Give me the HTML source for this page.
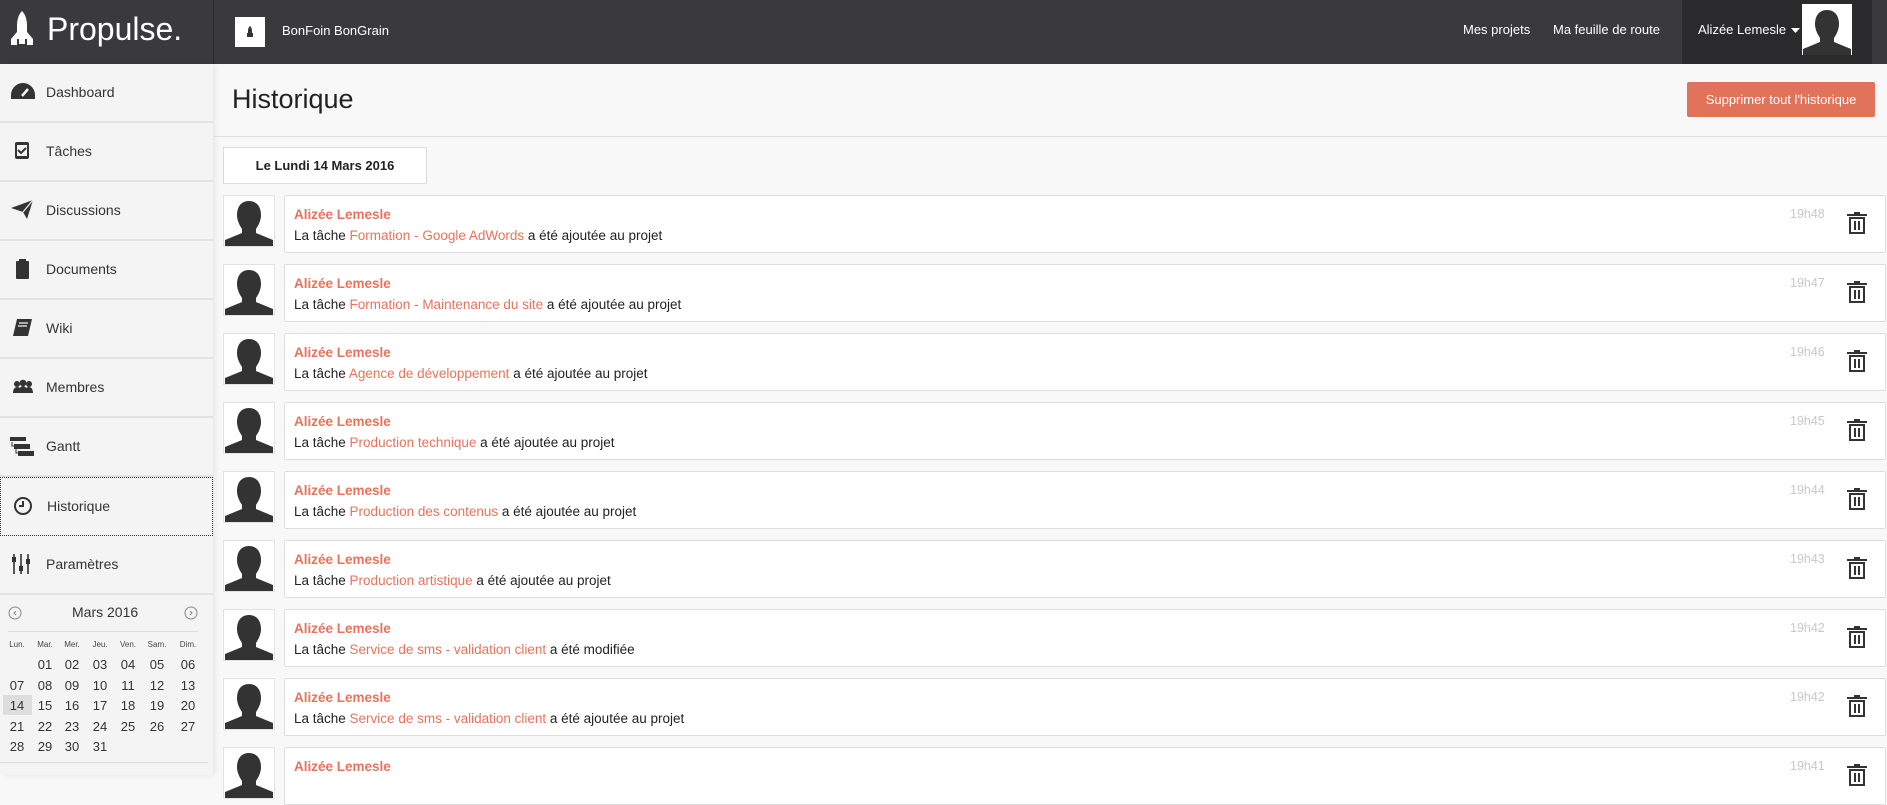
<!DOCTYPE html>
<html><head><meta charset="utf-8"><style>
*{margin:0;padding:0;box-sizing:border-box}
body{width:1887px;height:775px;overflow:hidden;background:#f8f8f8;font-family:"Liberation Sans",sans-serif;color:#333;position:relative}
.hdr{position:absolute;left:0;top:0;width:1887px;height:64px;background:#3a3a3c}
.abs{position:absolute}
.side{position:absolute;left:0;top:64px;width:213px;height:711px;background:#f4f4f4;box-shadow:2px 0 6px rgba(0,0,0,.08)}
.item{position:absolute;left:0;width:213px;height:59px;border-bottom:2px solid #e2e2e2;font-size:14px;color:#333}
.item span{position:absolute;left:46px;top:20px}
.item svg{position:absolute;left:10px;top:17px}
.cal{position:absolute;font-size:13px;color:#333}
.card{position:absolute;left:284px;width:1602px;height:58px;background:#fff;border:1px solid #dedede;border-radius:2px}
.av{position:absolute;left:223px;width:52px;height:52px;background:#fff;border:1px solid #e2e2e2}
.nm{position:absolute;left:9px;top:11px;font-size:13.5px;color:#e8735a;font-weight:bold}
.ds{position:absolute;left:9px;top:32px;font-size:13.5px;color:#222}
.ds b{font-weight:normal;color:#e8735a}
.tm{position:absolute;left:1505px;top:11px;font-size:12.5px;color:#c8c8c8}
.tr{position:absolute;left:1561px;top:16px}
</style></head><body>
<div class="hdr"></div>
<div class="abs" style="left:1682px;top:0;width:190px;height:64px;background:#2a2a2c"></div>
<svg class="abs" style="left:10px;top:11px" width="24" height="35" viewBox="0 0 24 35"><path d="M12 0C8 4 7 10 7 15v13h10V15c0-5-1-11-5-15z" fill="#fff"/><path d="M7 21l-6 7v6h6zM17 21l6 7v6h-6z" fill="#fff"/><rect x="9" y="28" width="6" height="5" fill="#fff"/></svg>
<div class="abs" style="left:47px;top:11px;font-size:32px;color:#fff">Propulse.</div>
<div class="abs" style="left:213px;top:0;width:1px;height:64px;background:#2c2c2e"></div>
<div class="abs" style="left:235px;top:17px;width:30px;height:30px;background:#fff"></div>
<svg class="abs" style="left:246px;top:26px" width="8" height="11"><path d="M4 0C2 2 2 4 2 6v3h4V6C6 4 6 2 4 0zM1 7v4h6V7z" fill="#333"/></svg>
<div class="abs" style="left:282px;top:23px;font-size:13px;color:#fff">BonFoin BonGrain</div>
<div class="abs" style="left:1463px;top:22px;font-size:13px;color:#fff">Mes projets</div>
<div class="abs" style="left:1553px;top:22px;font-size:13px;color:#fff">Ma feuille de route</div>
<div class="abs" style="left:1698px;top:22px;font-size:13px;color:#fff">Alizée Lemesle</div>
<svg class="abs" style="left:1791px;top:28px" width="9" height="6"><path d="M0 0h9L4.5 5z" fill="#fff"/></svg>
<div class="abs" style="left:1802px;top:4px;width:50px;height:51px;background:#fff;overflow:hidden"><svg width="50" height="51" viewBox="0 0 50 51"><path d="M25 6c-8 0-12 6-12 14 0 6 3 11 5 14v4L1 45v6h48v-6L32 38v-4c2-3 5-8 5-14 0-8-4-14-12-14z" fill="#333"/></svg></div>

<div class="side">
<div class="item" style="top:0"><svg width="26" height="20" viewBox="0 0 26 20"><path d="M13 2C6 2 1 8 1 14v4h24v-4C25 8 20 2 13 2z" fill="#333"/><path d="M12 15l6-7" stroke="#f4f4f4" stroke-width="2.5"/></svg><span>Dashboard</span></div>
<div class="item" style="top:59px"><svg width="26" height="22" viewBox="0 0 26 22"><rect x="5" y="2" width="14" height="17" rx="2" fill="#333"/><rect x="7" y="5" width="10" height="11" fill="#f4f4f4"/><path d="M8 10l3 3 5-5" stroke="#333" stroke-width="2" fill="none"/></svg><span>Tâches</span></div>
<div class="item" style="top:118px"><svg width="26" height="22" viewBox="0 0 26 22"><path d="M1 9L23 1 17 20 13 13z" fill="#333"/><path d="M13 13L23 1" stroke="#f4f4f4" stroke-width="1.2"/></svg><span>Discussions</span></div>
<div class="item" style="top:177px"><svg width="26" height="22" viewBox="0 0 26 22"><rect x="6" y="3" width="13" height="18" rx="1" fill="#333"/><rect x="9" y="1" width="7" height="4" fill="#333"/></svg><span>Documents</span></div>
<div class="item" style="top:236px"><svg width="26" height="22" viewBox="0 0 26 22"><path d="M7 2h15l-4 17H3z" fill="#333"/><path d="M9 6h9M8 9h9" stroke="#f4f4f4" stroke-width="1.2"/></svg><span>Wiki</span></div>
<div class="item" style="top:295px"><svg width="26" height="22" viewBox="0 0 26 22"><circle cx="7" cy="8" r="3" fill="#333"/><circle cx="13" cy="7" r="3.3" fill="#333"/><circle cx="19" cy="8" r="3" fill="#333"/><path d="M3 17c0-4 2-6 4-6s3 1 3 1 1-2 3-2 3 2 3 2 1-1 3-1 4 2 4 6z" fill="#333"/></svg><span>Membres</span></div>
<div class="item" style="top:354px"><svg width="26" height="22" viewBox="0 0 26 22"><rect x="0" y="2" width="16" height="4" fill="#333"/><rect x="4" y="9" width="16" height="5" fill="#333"/><rect x="8" y="16" width="16" height="5" fill="#333"/><path d="M2 7v4h2M6 14v4h2" stroke="#333" stroke-width="1" fill="none"/></svg><span>Gantt</span></div>
<div class="item" style="top:413px;border:1px dotted #333"><svg width="26" height="22" viewBox="0 0 26 22"><circle cx="12" cy="11" r="8" fill="none" stroke="#333" stroke-width="2"/><path d="M12 6v5h-4" stroke="#333" stroke-width="2" fill="none"/></svg><span>Historique</span></div>
<div class="item" style="top:472px"><svg width="26" height="22" viewBox="0 0 26 22"><path d="M4 1v20M11 1v20M18 1v20" stroke="#333" stroke-width="1.6"/><rect x="2" y="4" width="4" height="5" fill="#333"/><rect x="9" y="13" width="4" height="5" fill="#333"/><rect x="16" y="6" width="4" height="5" fill="#333"/></svg><span>Paramètres</span></div>
</div>
<svg class="abs" style="left:8px;top:606px" width="14" height="14"><circle cx="7" cy="7" r="6" fill="none" stroke="#888"/><path d="M8 5L6 7l2 2" stroke="#888" fill="none"/></svg>
<svg class="abs" style="left:184px;top:606px" width="14" height="14"><circle cx="7" cy="7" r="6" fill="none" stroke="#888"/><path d="M6 5l2 2-2 2" stroke="#888" fill="none"/></svg>
<div class="cal" style="left:72px;top:604px;font-size:14px">Mars 2016</div>
<div class="abs" style="left:8px;top:631px;width:190px;height:1px;background:#ddd"></div>
<div class="abs" style="left:3px;top:695px;width:29px;height:20px;background:#ddd"></div>
<div class="abs" style="left:0;top:762px;width:208px;height:1px;background:#ddd"></div>
<div id="cal"></div>
<script>
var xs=[17,45,72,100,128,157,188],h=["Lun.","Mar.","Mer.","Jeu.","Ven.","Sam.","Dim."],s="";
h.forEach(function(t,i){s+='<div class="cal" style="left:'+(xs[i]-10)+'px;top:640px;font-size:8px;width:20px;text-align:center;color:#444">'+t+'</div>'});
var ys=[657,678,698,719,739];
for(var d=1;d<=31;d++){var p=d,r=Math.floor(p/7),c=p%7;s+='<div class="cal" style="left:'+(xs[c]-12)+'px;top:'+ys[r]+'px;width:24px;text-align:center">'+(d<10?"0"+d:d)+'</div>'}
document.getElementById("cal").innerHTML=s;
</script>

<div class="abs" style="left:232px;top:84px;font-size:27px;color:#222">Historique</div>
<div class="abs" style="left:1687px;top:82px;width:188px;height:35px;background:#e0735a;border-radius:2px;color:#fff;font-size:13px;text-align:center;line-height:35px">Supprimer tout l'historique</div>
<div class="abs" style="left:213px;top:136px;width:1674px;height:1px;background:#ddd"></div>
<div class="abs" style="left:223px;top:147px;width:204px;height:37px;background:#fff;border:1px solid #ddd;font-size:13px;font-weight:bold;text-align:center;line-height:35px;color:#222">Le Lundi 14 Mars 2016</div>
<div id="rows"></div>
<script>
var R=[["Formation - Google AdWords","a été ajoutée au projet","19h48"],["Formation - Maintenance du site","a été ajoutée au projet","19h47"],["Agence de développement","a été ajoutée au projet","19h46"],["Production technique","a été ajoutée au projet","19h45"],["Production des contenus","a été ajoutée au projet","19h44"],["Production artistique","a été ajoutée au projet","19h43"],["Service de sms - validation client","a été modifiée","19h42"],["Service de sms - validation client","a été ajoutée au projet","19h42"],["","","19h41"]];
var o="";
R.forEach(function(r,i){var y=195+i*69;
o+='<div class="av" style="top:'+y+'px"><svg width="50" height="50" viewBox="0 0 50 50"><path d="M25 5c-8 0-12 6-12 14 0 6 3 11 5 14v4L1 44v6h48v-6L32 37v-4c2-3 5-8 5-14 0-8-4-14-12-14z" fill="#333"/></svg></div>';
o+='<div class="card" style="top:'+y+'px"><div class="nm">Alizée Lemesle</div>'+(r[0]?'<div class="ds">La tâche <b>'+r[0]+'</b> '+r[1]+'</div>':'')+'<div class="tm">'+r[2]+'</div><svg class="tr" width="22" height="22" viewBox="0 0 22 22"><path d="M1 3h20M8 1h6" stroke="#333" stroke-width="2"/><path d="M4 6h14v15H4z" fill="none" stroke="#333" stroke-width="2"/><path d="M9 9v9M13 9v9" stroke="#333" stroke-width="2"/></svg></div>';});
document.getElementById("rows").innerHTML=o;
</script>
</body></html>
